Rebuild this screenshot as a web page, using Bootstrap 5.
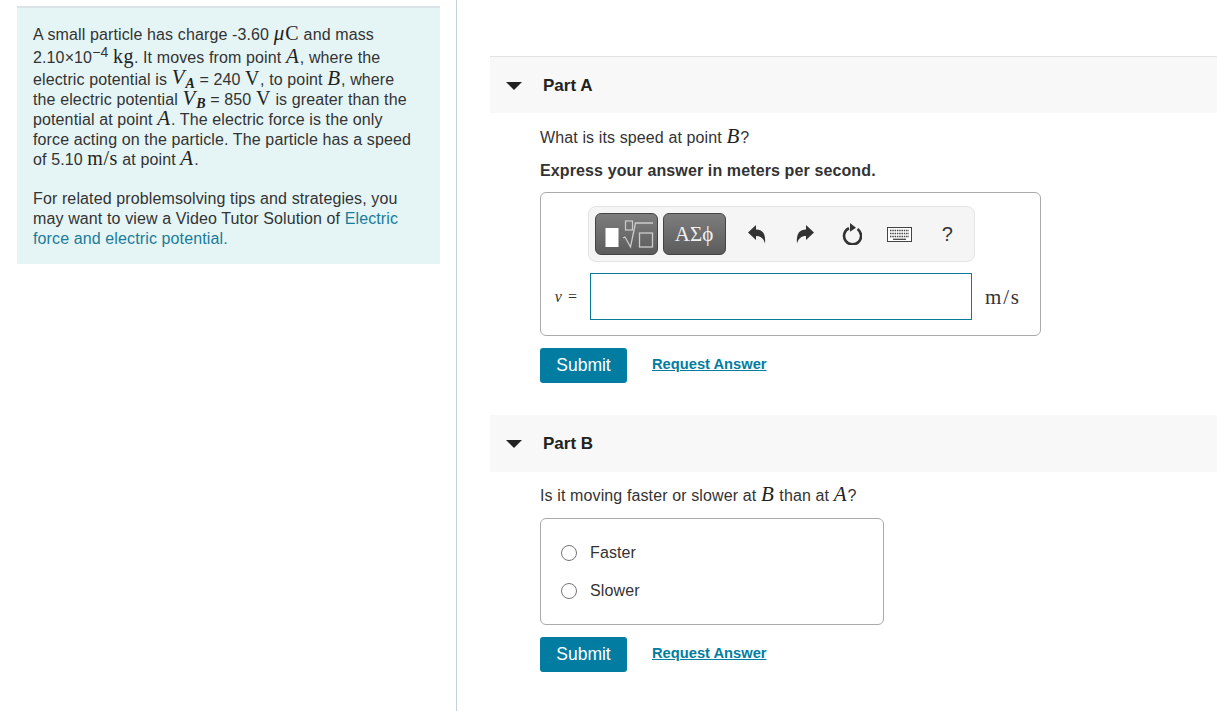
<!DOCTYPE html>
<html lang="en">
<head>
  <meta charset="UTF-8" />
  <meta name="viewport" content="width=device-width, initial-scale=1.0" />
  <title>Part A and Part B</title>
  <link href="https://cdn.jsdelivr.net/npm/bootstrap@5.3.3/dist/css/bootstrap.min.css" rel="stylesheet" />
  <style>
    html, body { height: 100%; }
    body { font-family: "Liberation Sans", Arial, sans-serif; font-size: 16px; line-height: 20px; letter-spacing: .12px; color: #333; overflow: hidden; }
    .page-wrap { height: 711px; }
    .left-col { width: 457px; flex: none; border-right: 1px solid #c3d2dd; padding: 6px 16px 0 17px; }
    .intro-box { background: #e5f5f6; border-top: 2px solid #dbe3e6; padding: 17px 22px 16px 16px; height: 258px; }
    .intro-box p { margin: 0 0 19px; }
    .intro-box a { color: #1a7c98; text-decoration: none; }
    .mi { font-family: "Liberation Serif", serif; font-style: italic; font-size: 21px; letter-spacing: 1px; line-height: 0; color: #222; }
    .mr { font-family: "Liberation Serif", serif; font-size: 20px; letter-spacing: .5px; line-height: 0; color: #222; }
    .intro-box sup { font-size: 14px; top: -6px; line-height: 0; vertical-align: baseline; position: relative; }
    .intro-box sub { font-size: 14px; line-height: 0; font-weight: bold; letter-spacing: 0; }
    .lift-a, .lift-b, .lift-c { display: inline-block; width: 0; }
    .lift-a { height: 17.500px; }
    .lift-b { height: 16.500px; }
    .lift-c { height: 15.500px; }
    .right-col { padding: 56px 0 0 33px; min-width: 0; }
    .part-head { height: 57px; background: #f8f8f8; font-size: 17px; font-weight: bold; letter-spacing: 0; color: #222; padding: 1px 0 0 16px; }
    .part-head.first-part { border-top: 1px solid #e2e2e2; }
    .caret-down { width: 0; height: 0; border-left: 8px solid transparent; border-right: 8px solid transparent; border-top: 8px solid #222; margin-right: 21px; }
    .part-body { padding: 15px 0 0 50px; }
    .part-body.part-two { padding-top: 14px; }
    .part-body p { margin: 0; }
    .part-body p.express-line { margin-top: 13px; }
    .answer-box { width: 501px; height: 144px; border: 1px solid #aaa; border-radius: 6px; margin-top: 11px; padding: 13px 0 0 47px; }
    .tool-bar { width: 387px; height: 56px; background: #f5f5f5; border: 1px solid #e4e4e4; border-radius: 8px; padding: 6px 0 0 6px; }
    .tool-btn { width: 63px; height: 42px; border: 1px solid #444; border-radius: 6px; background: linear-gradient(#7d7d7d, #5c5c5c); padding: 0; margin-right: 4.500px; color: #f0f0f0; font-family: "Liberation Serif", serif; font-size: 21px; line-height: 38px; letter-spacing: 0; }
    .tool-icons { margin-left: 3.500px; }
    .tool-icon { width: 47.500px; height: 42px; flex: none; }
    .help-mark { font-size: 20px; color: #333; }
    .input-row { margin-top: 11px; margin-left: -47px; }
    .var-label { width: 49px; font-size: 16px; text-align: right; padding-right: 12px; font-family: "Liberation Serif", serif; letter-spacing: 1px; color: #333; flex: none; }
    .ans-field { width: 382px; height: 47px; border: 1px solid #0a7b97; background: #fff; flex: none; }
    .unit-label { margin-left: 13px; font-family: "Liberation Serif", serif; font-size: 21px; letter-spacing: 1.800px; color: #333; }
    .submit-row { margin-top: 12px; }
    .btn-submit { width: 87px; height: 35px; background: #027da1; border: 0; border-radius: 3px; color: #fff; font-size: 17.500px; line-height: 34px; letter-spacing: 0; padding: 0 0 1px; }
    .btn-submit:hover { background: #027da1; color: #fff; }
    .req-link { margin: 0 0 3px 25px; font-size: 14.700px; font-weight: bold; letter-spacing: 0; color: #027da1; }
    .part-gap { margin-top: 32px; }
    .choice-box { width: 344px; height: 107px; border: 1px solid #aaa; border-radius: 6px; margin-top: 12px; padding: 15px 0 0 20px; }
    .choice-row { height: 38px; }
    .choice-row input { width: 16px; height: 16px; margin: 0 13px 0 0; border: 1px solid #767676; flex: none; }
  </style>
</head>
<body>
  <div class="d-flex page-wrap">
    <div class="left-col">
      <div class="intro-box">
        <p>A small particle has charge -3.60 <span class="mi">μ</span><span class="mr">C</span> and mass <span class="text-nowrap">2.10<span class="lift-a"></span>×10<sup>−4</sup></span> <span class="mr">kg</span>. It moves from point <span class="mi">A</span>, where the electric<span class="lift-b"></span> potential is <span class="mi">V<sub>A</sub></span> = 240 <span class="mr">V</span>, to point <span class="mi">B</span>, where the electric<span class="lift-c"></span> potential <span class="mi">V<sub>B</sub></span> = 850 <span class="mr">V</span> is greater than the potential at point <span class="mi">A</span>. The electric force is the only force acting on the particle. The particle has a speed of 5.10 <span class="mr">m/s</span> at point <span class="mi">A</span>.</p>
        <p>For related problemsolving tips and strategies, you may want to view a Video Tutor Solution of <a href="#">Electric force and electric potential.</a></p>
      </div>
    </div>

    <div class="right-col flex-grow-1">
      <div class="part-head first-part d-flex align-items-center">
        <span class="caret-down"></span><span>Part A</span>
      </div>
      <div class="part-body">
        <p>What is its speed at point <span class="mi">B</span>?</p>
        <p class="fw-bold express-line">Express your answer in meters per second.</p>
        <div class="answer-box">
          <div class="tool-bar d-flex align-items-start">
            <button class="btn tool-btn d-flex align-items-center justify-content-center" type="button" aria-label="Templates">
              <svg width="56" height="32" viewBox="0 0 56 32">
                <rect x="6.500" y="10" width="13" height="19" fill="#fff"/>
                <rect x="26.500" y="3" width="7" height="9" fill="none" stroke="#ccc" stroke-width="1.200"/>
                <path d="M24 20l2-1 5.500 10 5-24H54" fill="none" stroke="#ccc" stroke-width="1.300"/>
                <rect x="40.500" y="15" width="13" height="14" fill="none" stroke="#ccc" stroke-width="1.300"/>
              </svg>
            </button>
            <button class="btn tool-btn" type="button">ΑΣϕ</button>
            <div class="d-flex align-items-center tool-icons">
              <div class="tool-icon d-flex justify-content-center align-items-center">
                <svg width="18" height="19" viewBox="0 0 18 19"><path d="M0 7.500 8 0v4.500c6 0 10 3.500 9 14-1.500-5-4-7.500-9-7.500V15z" fill="#333"/></svg>
              </div>
              <div class="tool-icon d-flex justify-content-center align-items-center">
                <svg width="18" height="19" viewBox="0 0 18 19"><path d="M18 7.500 10 0v4.500C4 4.500 0 8 1 18.500 2.500 13.500 5 11 10 11v4z" fill="#333"/></svg>
              </div>
              <div class="tool-icon d-flex justify-content-center align-items-center">
                <svg width="20" height="22" viewBox="0 0 20 22"><path d="M7 5.200A8.500 8.500 0 1 0 15.500 6" fill="none" stroke="#333" stroke-width="2.600"/><path d="M8 0l6 4.700-6 4z" fill="#333"/></svg>
              </div>
              <div class="tool-icon d-flex justify-content-center align-items-center">
                <svg width="25" height="15" viewBox="0 0 25 15">
                  <rect x=".5" y=".5" width="24" height="14" fill="#fff" stroke="#444"/>
                  <path d="M3 3.500h19M3 6.500h19M3 9.500h19" stroke="#444" stroke-width="1.500" stroke-dasharray="1.500 .8"/>
                  <path d="M6 12.300h13" stroke="#444" stroke-width="1.300"/>
                </svg>
              </div>
              <div class="tool-icon text-center help-mark d-flex align-items-center justify-content-center">?</div>
            </div>
          </div>
          <div class="input-row d-flex align-items-center">
            <span class="var-label"><i>v</i> =</span>
            <input class="ans-field" type="text" aria-label="v" />
            <span class="unit-label">m/s</span>
          </div>
        </div>
        <div class="submit-row d-flex align-items-center">
          <button class="btn btn-submit" type="button">Submit</button>
          <a class="req-link" href="#">Request Answer</a>
        </div>
      </div>

      <div class="part-head part-gap d-flex align-items-center">
        <span class="caret-down"></span><span>Part B</span>
      </div>
      <div class="part-body part-two">
        <p>Is it moving faster or slower at <span class="mi">B</span> than at <span class="mi">A</span>?</p>
        <div class="choice-box">
          <label class="choice-row d-flex align-items-center">
            <input class="form-check-input" type="radio" name="speed" /><span>Faster</span>
          </label>
          <label class="choice-row d-flex align-items-center">
            <input class="form-check-input" type="radio" name="speed" /><span>Slower</span>
          </label>
        </div>
        <div class="submit-row d-flex align-items-center">
          <button class="btn btn-submit" type="button">Submit</button>
          <a class="req-link" href="#">Request Answer</a>
        </div>
      </div>
    </div>
  </div>
  <script src="https://cdn.jsdelivr.net/npm/bootstrap@5.3.3/dist/js/bootstrap.bundle.min.js"></script>
</body>
</html>
